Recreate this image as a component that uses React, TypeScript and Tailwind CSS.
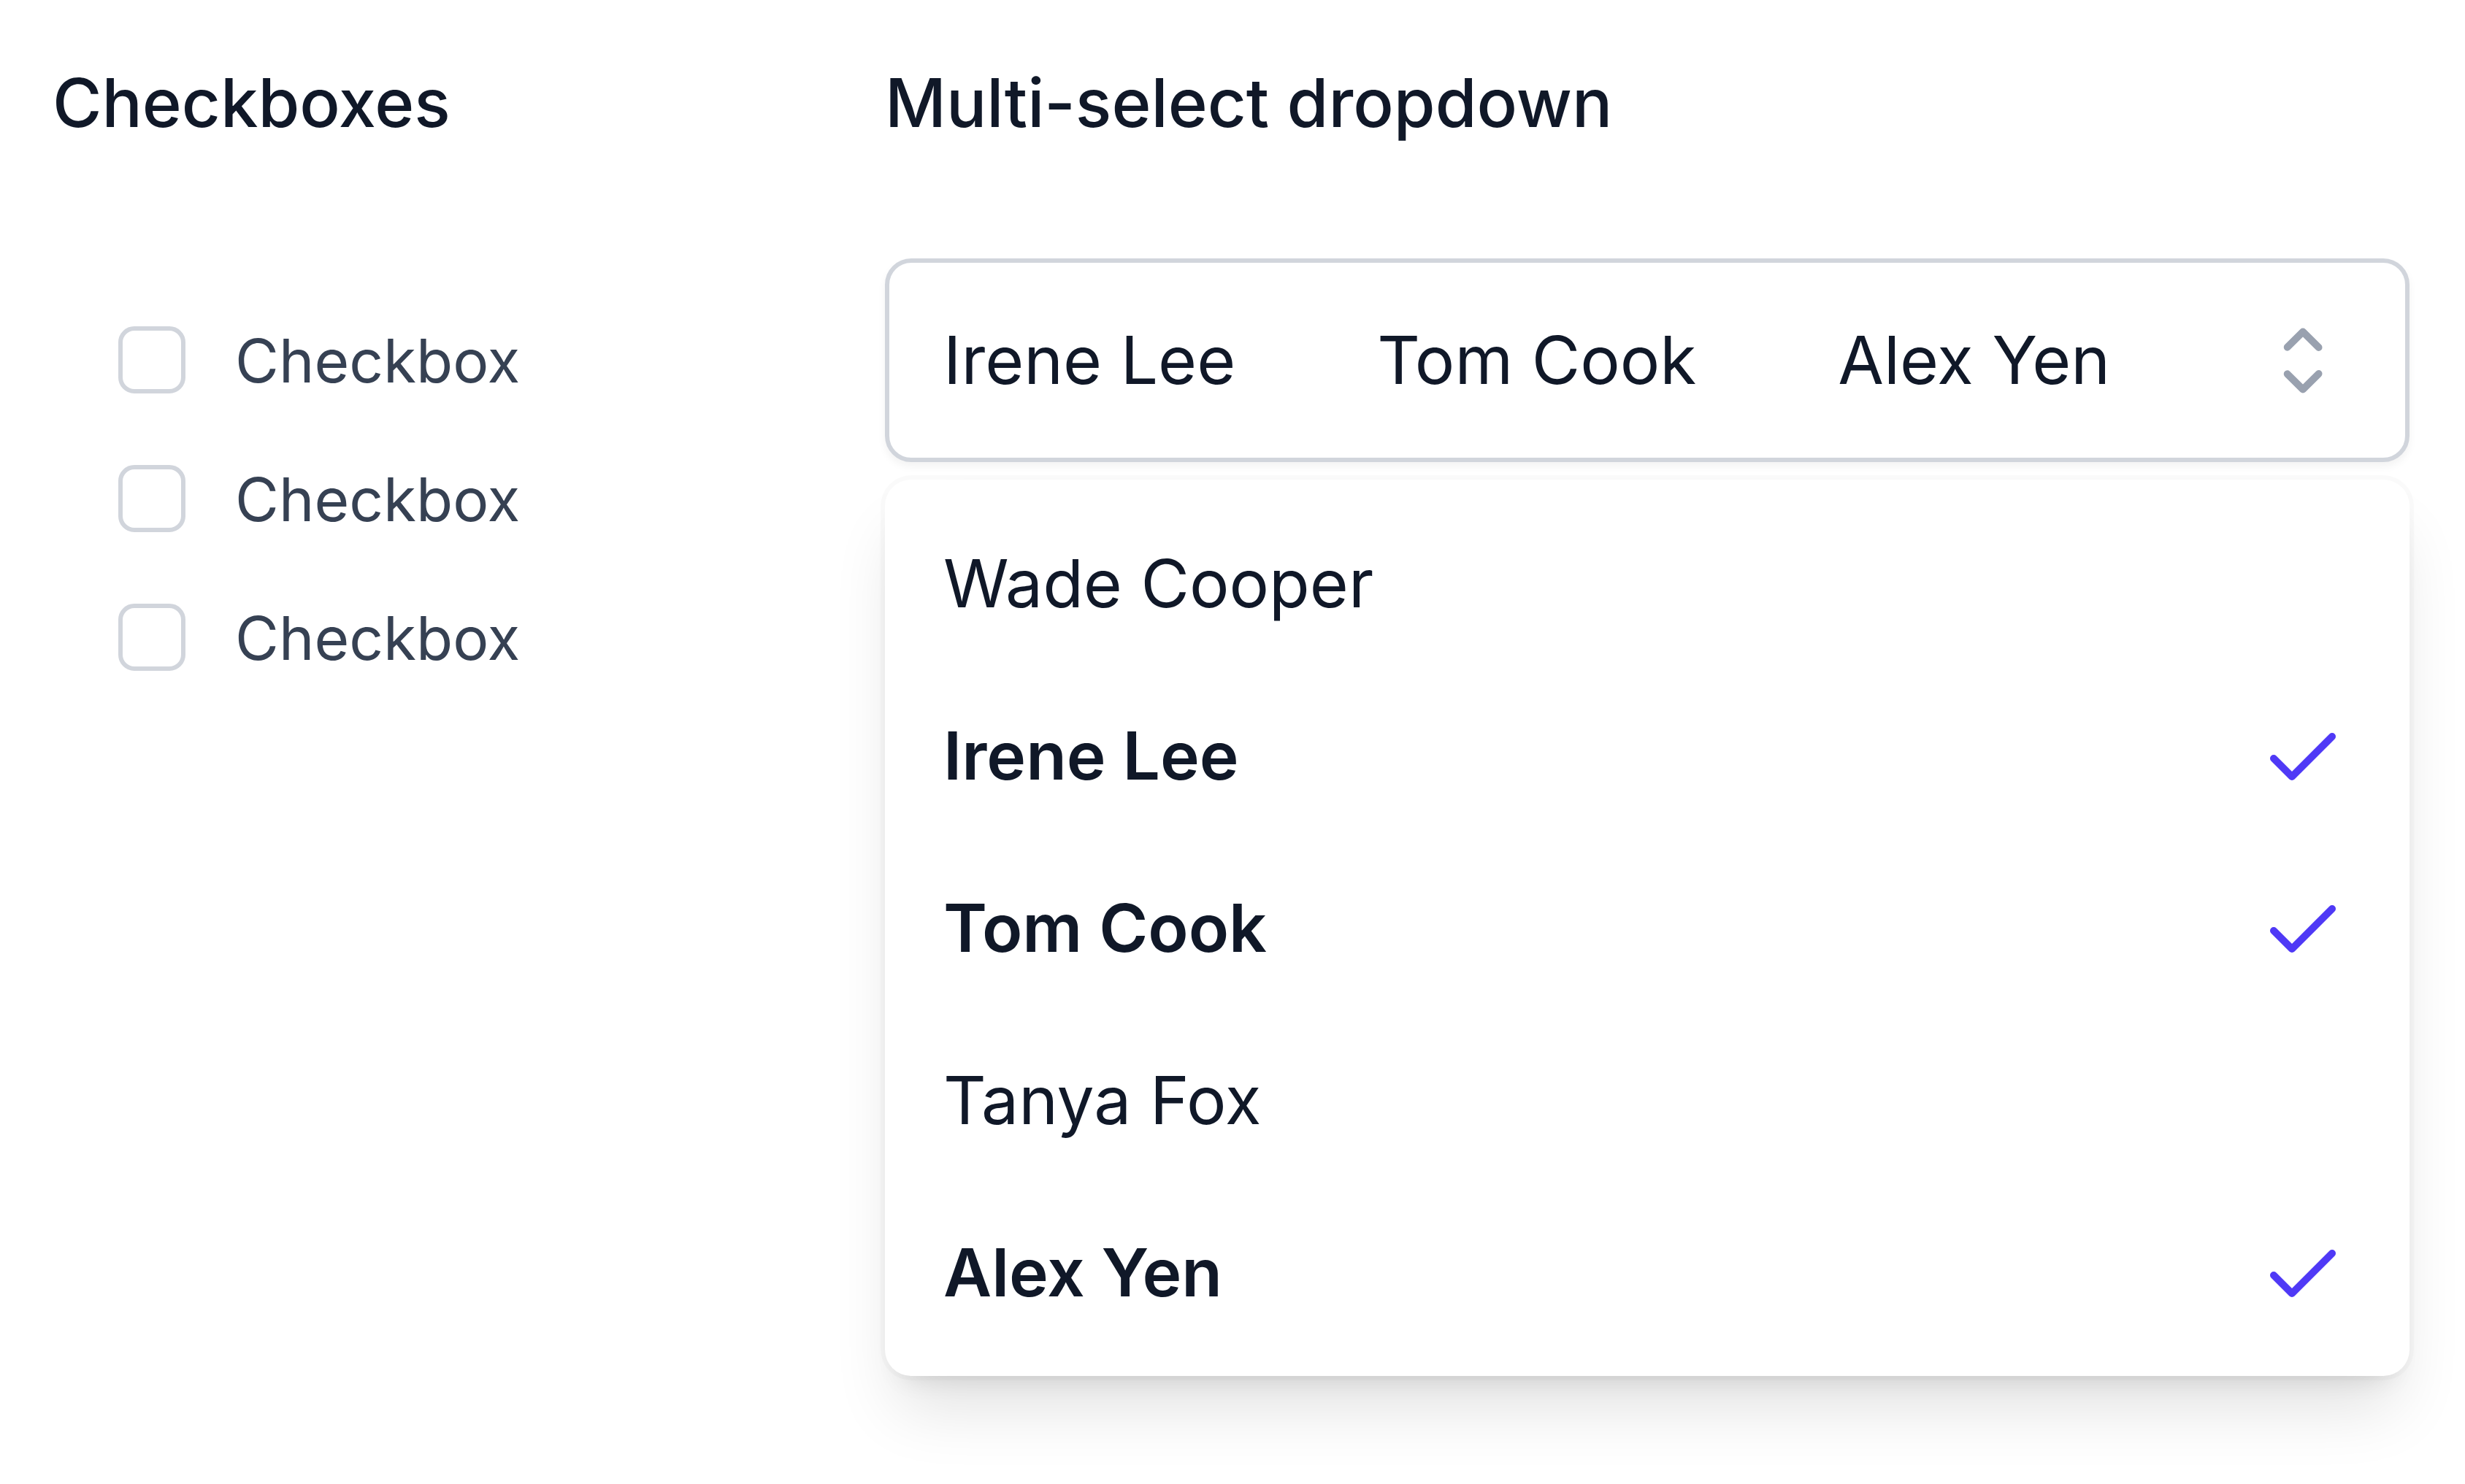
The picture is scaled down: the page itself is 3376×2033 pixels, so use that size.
import { useState } from "react";

const people = ["Wade Cooper", "Irene Lee", "Tom Cook", "Tanya Fox", "Alex Yen"];

function ChevronUpDown() {
  return (
    <svg viewBox="0 0 20 20" fill="currentColor" className="w-[132px] h-[132px] text-gray-400 shrink-0">
      <path
        fillRule="evenodd"
        clipRule="evenodd"
        d="M10.53 3.47a.75.75 0 0 0-1.06 0L6.22 6.72a.75.75 0 0 0 1.06 1.06L10 5.06l2.72 2.72a.75.75 0 1 0 1.06-1.06l-3.25-3.25Zm-4.31 9.81 3.25 3.25a.75.75 0 0 0 1.06 0l3.25-3.25a.75.75 0 1 0-1.06-1.06L10 14.94l-2.72-2.72a.75.75 0 0 0-1.06 1.06Z"
      />
    </svg>
  );
}

function CheckIcon() {
  return (
    <svg viewBox="0 0 24 24" fill="none" stroke="currentColor" strokeWidth={2} strokeLinecap="round" strokeLinejoin="round" className="mt-[8px] w-[120px] h-[120px] text-indigo-600 shrink-0">
      <path d="M20 6 9 17l-5-5" />
    </svg>
  );
}

export default function App() {
  const [selected, setSelected] = useState<string[]>(["Irene Lee", "Tom Cook", "Alex Yen"]);
  const [checks, setChecks] = useState([false, false, false]);

  function toggle(name: string) {
    setSelected((s) => (s.includes(name) ? s.filter((n) => n !== name) : people.filter((p) => s.includes(p) || p === name)));
  }

  return (
    <div className="flex w-[3376px] h-[2033px] bg-white pl-[72px] pt-[72px] font-['Inter',sans-serif]">
      <section className="w-[1140px] shrink-0">
        <h2 className="text-[92px] leading-[138px] font-medium text-gray-900">Checkboxes</h2>
        <ul className="mt-[188px] pl-[90px]">
          {checks.map((c, i) => (
            <li key={i} className="flex items-center h-[190px] gap-[68px]">
              <button
                onClick={() => setChecks((cs) => cs.map((v, j) => (j === i ? !v : v)))}
                className={`w-[92px] h-[92px] rounded-[22px] border-[6px] ${c ? "border-indigo-600 bg-indigo-600" : "border-gray-300 bg-white"}`}
              />
              <span className="pt-[2px] text-[82px] leading-[123px] text-gray-700">Checkbox</span>
            </li>
          ))}
        </ul>
      </section>

      <section className="w-[2088px] shrink-0">
        <h2 className="text-[92px] leading-[138px] font-medium text-gray-900">Multi-select dropdown</h2>
        <div className="relative mt-[144px]">
          <button className="flex items-center w-full h-[279px] bg-white border-[6px] border-gray-300 rounded-[36px] pl-[74px] pr-[74px] shadow-[0_6px_12px_rgba(0,0,0,0.05)]">
            <div className="flex items-center gap-[194px] text-[91px] leading-[137px] text-gray-900">
              {selected.map((n) => <span key={n}>{n}</span>)}
            </div>
            <span className="ml-auto"><ChevronUpDown /></span>
          </button>

          <ul className="absolute left-0 right-0 top-full mt-[24px] bg-white rounded-[36px] py-[24px] shadow-[0_60px_90px_-18px_rgba(0,0,0,0.12),0_24px_36px_-24px_rgba(0,0,0,0.12),0_0_0_6px_rgba(0,0,0,0.02)]">
            {people.map((p) => {
              const on = selected.includes(p);
              return (
                <li key={p} onClick={() => toggle(p)} className="flex items-center justify-between h-[236px] pl-[80px] pr-[86px] cursor-pointer">
                  <span className={`text-[91px] leading-[137px] text-gray-900 ${on ? "font-semibold" : "font-normal"}`}>{p}</span>
                  {on && <CheckIcon />}
                </li>
              );
            })}
          </ul>
        </div>
      </section>
    </div>
  );
}
